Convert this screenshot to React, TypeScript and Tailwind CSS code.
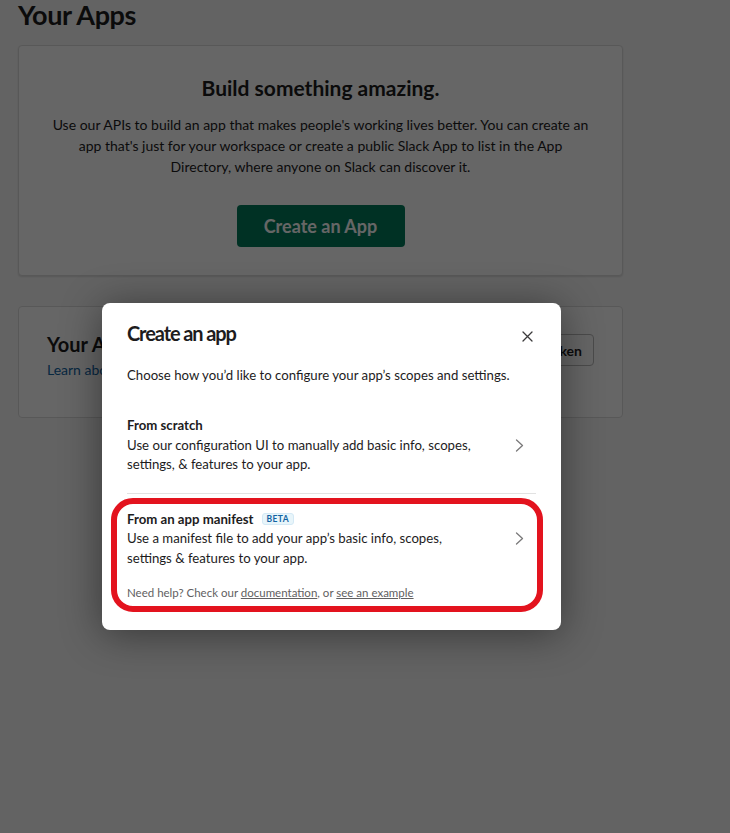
import React from 'react';

const font = { fontFamily: 'Lato, "Noto Sans", sans-serif' };

function Chevron() {
  return (
    <svg width="9" height="13" viewBox="0 0 9 13" fill="none" className="shrink-0">
      <path d="M1.5 1l6 5.5-6 5.5" stroke="#7a797a" strokeWidth="1.3" strokeLinecap="round" strokeLinejoin="round" />
    </svg>
  );
}

function CloseIcon() {
  return (
    <svg width="11" height="11" viewBox="0 0 11 11" fill="none">
      <path d="M1 1l9 9M10 1l-9 9" stroke="#3b3a3b" strokeWidth="1.3" strokeLinecap="round" />
    </svg>
  );
}

export default function App() {
  return (
    <div className="relative min-h-[833px] w-full overflow-hidden bg-[#f8f8f8] text-[#1d1c1d]" style={font}>
      {/* page behind the modal */}
      <div className="ml-[18px] w-[605px]">
        <h1 className="mt-[-2px] text-[27px] font-bold leading-[33px] tracking-[-0.4px]">Your Apps</h1>

        <section className="mt-[14px] rounded-[4px] border border-[#dddddd] bg-white px-[28px] pt-[28px] pb-[28px] text-center shadow-[0_1px_2px_rgba(0,0,0,0.12)]">
          <h2 className="text-[21px] font-bold leading-[27px]">Build something amazing.</h2>
          <p className="mx-auto mt-[13px] max-w-[550px] text-[14px] leading-[21px]">
            Use our APIs to build an app that makes people's working lives better. You can create an app that's just for your workspace or create a public Slack App to list in the App Directory, where anyone on Slack can discover it.
          </p>
          <button className="mt-[28px] h-[42px] w-[168px] rounded-[4px] bg-[#007a5a] text-[18px] font-bold text-white">
            Create an App
          </button>
        </section>

        <section className="mt-[30px] flex items-start justify-between rounded-[4px] border border-[#dddddd] bg-white px-[28px] pt-[24px] pb-[37px]">
          <div>
            <h2 className="text-[20px] font-bold leading-[26px]">Your App Configuration Tokens</h2>
            <a className="mt-[2px] block text-[14px] leading-[21px] text-[#1264a3]">Learn about tokens</a>
          </div>
          <button className="mt-[3px] h-[32px] rounded-[4px] border border-[#bbbbbb] px-[11px] text-[14px] font-bold">
            Generate Token
          </button>
        </section>
      </div>

      {/* overlay */}
      <div className="absolute inset-0 bg-black/60" />

      {/* modal */}
      <div className="absolute left-[102px] top-[303px] w-[459px] rounded-[8px] bg-white px-[25px] pt-[17px] pb-[29px] shadow-[0_4px_40px_rgba(0,0,0,0.45)]">
        <div className="flex h-[26px] items-center justify-between">
          <h2 className="text-[20px] font-bold leading-[26px] tracking-[-1.1px]">Create an app</h2>
          <button className="mr-[3px] mt-[6px]">
            <CloseIcon />
          </button>
        </div>
        <p className="mt-[19px] text-[13.2px] leading-[20px]">Choose how you’d like to configure your app’s scopes and settings.</p>

        <div className="mt-[14px] flex items-center justify-between border-b border-[#e2e2e2] pt-[17px] pb-[18px] pr-[12px]">
          <div className="text-[13.2px] leading-[19.5px]">
            <div className="font-bold">From scratch</div>
            <div className="max-w-[355px]">Use our configuration UI to manually add basic info, scopes, settings, &amp; features to your app.</div>
          </div>
          <Chevron />
        </div>

        <div className="pt-[16px]">
          <div className="flex items-center justify-between pr-[12px]">
            <div className="text-[13.2px] leading-[19.5px]">
              <div className="flex items-center">
                <span className="font-bold">From an app manifest</span>
                <span className="ml-[8px] rounded-[3px] border border-[#d4e9f5] bg-[#e8f5fa] px-[4px] text-[8.5px] font-bold leading-[10px] tracking-[0.4px] text-[#1264a3]">BETA</span>
              </div>
              <div className="max-w-[335px]">Use a manifest file to add your app’s basic info, scopes, settings &amp; features to your app.</div>
            </div>
            <Chevron />
          </div>
          <p className="mt-[17px] text-[11.5px] leading-[16px] text-[#616061]">
            Need help? Check our <a className="underline">documentation</a>, or <a className="underline">see an example</a>
          </p>
        </div>

        {/* highlight annotation */}
        <div className="pointer-events-none absolute left-[9px] top-[195px] h-[114px] w-[432px] rounded-[22px] border-[6px] border-[#e3131e]" />
      </div>
    </div>
  );
}
